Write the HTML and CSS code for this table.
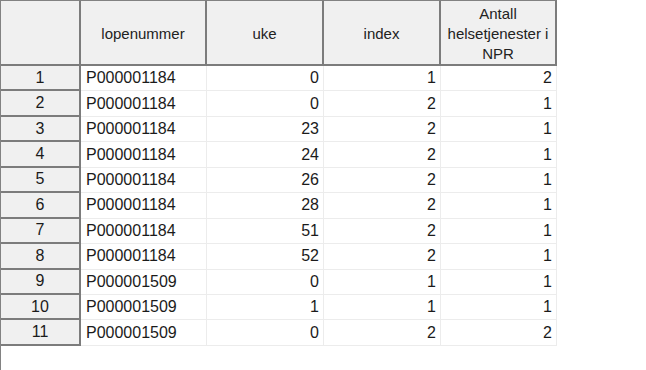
FILE: index.html
```html
<!DOCTYPE html>
<html>
<head>
<meta charset="utf-8">
<link rel="stylesheet" href="styles.css">
</head>
<body>
<div class="frame">
  <div class="grid">
    <div class="hcell corner"></div>
    <div class="hcell">lopenummer</div>
    <div class="hcell">uke</div>
    <div class="hcell">index</div>
    <div class="hcell">Antall helsetjenester i NPR</div>

    <div class="rh">1</div><div class="dc txt">P000001184</div><div class="dc">0</div><div class="dc">1</div><div class="dc">2</div>
    <div class="rh">2</div><div class="dc txt">P000001184</div><div class="dc">0</div><div class="dc">2</div><div class="dc">1</div>
    <div class="rh">3</div><div class="dc txt">P000001184</div><div class="dc">23</div><div class="dc">2</div><div class="dc">1</div>
    <div class="rh">4</div><div class="dc txt">P000001184</div><div class="dc">24</div><div class="dc">2</div><div class="dc">1</div>
    <div class="rh">5</div><div class="dc txt">P000001184</div><div class="dc">26</div><div class="dc">2</div><div class="dc">1</div>
    <div class="rh">6</div><div class="dc txt">P000001184</div><div class="dc">28</div><div class="dc">2</div><div class="dc">1</div>
    <div class="rh">7</div><div class="dc txt">P000001184</div><div class="dc">51</div><div class="dc">2</div><div class="dc">1</div>
    <div class="rh">8</div><div class="dc txt">P000001184</div><div class="dc">52</div><div class="dc">2</div><div class="dc">1</div>
    <div class="rh">9</div><div class="dc txt">P000001509</div><div class="dc">0</div><div class="dc">1</div><div class="dc">1</div>
    <div class="rh">10</div><div class="dc txt">P000001509</div><div class="dc">1</div><div class="dc">1</div><div class="dc">1</div>
    <div class="rh">11</div><div class="dc txt">P000001509</div><div class="dc">0</div><div class="dc">2</div><div class="dc">2</div>
  </div>
</div>
</body>
</html>
```
FILE: styles.css
```css
html, body {
  margin: 0;
  padding: 0;
  background: #ffffff;
}
.frame {
  width: 646px;
  height: 370px;
  box-sizing: border-box;
  border-left: 1px solid #828282;
  font-family: "Liberation Sans", Arial, sans-serif;
  color: #1b1b1b;
}
.grid {
  display: grid;
  grid-template-columns: 80px 126px 117px 117px 116px;
  grid-template-rows: 66px repeat(11, 25.45px);
  width: max-content;
}
.hcell {
  box-sizing: border-box;
  background: #f0f0f0;
  border-top: 1px solid #828282;
  border-right: 2px solid #7c7c7c;
  border-bottom: 2px solid #7c7c7c;
  display: flex;
  align-items: center;
  justify-content: center;
  text-align: center;
  font-size: 15px;
  line-height: 20px;
  color: #222;
  padding: 3px 1px 0;
}
.rh {
  box-sizing: border-box;
  background: #f0f0f0;
  border-right: 2px solid #7c7c7c;
  border-bottom: 2px solid #7c7c7c;
  display: flex;
  align-items: center;
  justify-content: center;
  font-size: 16px;
}
.dc {
  box-sizing: border-box;
  border-right: 1px solid #ececec;
  border-bottom: 1px solid #ececec;
  display: flex;
  align-items: center;
  justify-content: flex-end;
  padding: 0 4px;
  font-size: 16px;
}
.dc.txt {
  justify-content: flex-start;
  padding-left: 5px;
}
```
